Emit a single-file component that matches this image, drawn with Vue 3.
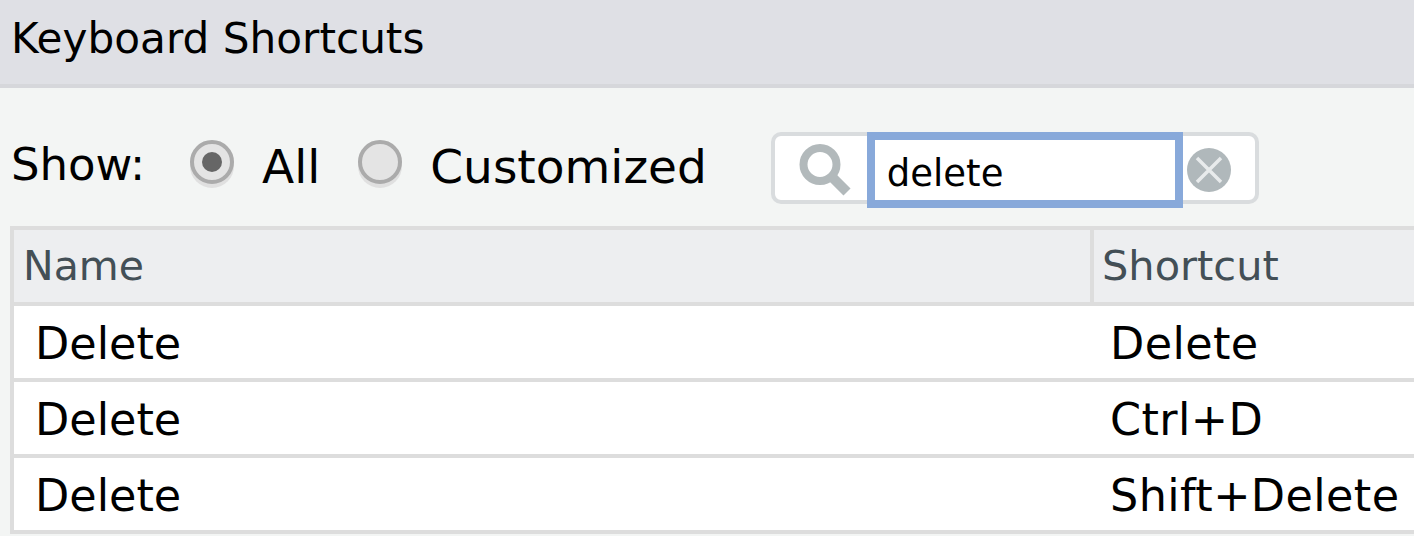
<template>
  <div class="dialog">
    <div class="title-bar">Keyboard Shortcuts</div>
    <div class="filters">
      <span class="show-label">Show:</span>
      <label class="radio-item">
        <span class="radio radio-on"></span>
        <span class="radio-text">All</span>
      </label>
      <label class="radio-item">
        <span class="radio"></span>
        <span class="radio-text">Customized</span>
      </label>
      <div class="search">
        <svg class="search-icon" width="56" height="56" viewBox="0 0 56 56">
          <circle cx="23" cy="22.5" r="16.5" fill="none" stroke="#b2b9bb" stroke-width="8" />
          <path d="M34 34 L50 50" stroke="#b2b9bb" stroke-width="10" />
        </svg>
        <input class="search-input" type="text" value="delete" readonly>
        <svg class="clear-icon" width="44" height="44" viewBox="0 0 44 44">
          <circle cx="22" cy="22" r="22" fill="#b0b8bb" />
          <path d="M10 10 L34 34 M34 10 L10 34" stroke="#e8ebec" stroke-width="3.5" />
        </svg>
      </div>
    </div>
    <div class="table">
      <div class="row head">
        <div class="col-name">Name</div>
        <div class="col-shortcut">Shortcut</div>
      </div>
      <div class="row" v-for="item in shortcuts" :key="item.shortcut">
        <div class="col-name">{{ item.name }}</div>
        <div class="col-shortcut">{{ item.shortcut }}</div>
      </div>
    </div>
  </div>
</template>

<script setup>
  const shortcuts = [
    { name: 'Delete', shortcut: 'Delete' },
    { name: 'Delete', shortcut: 'Ctrl+D' },
    { name: 'Delete', shortcut: 'Shift+Delete' },
  ];
</script>

<style>
  html, body {
    margin: 0;
    overflow: hidden;
  }
</style>

<style scoped>
  .dialog {
    width: 1414px;
    height: 536px;
    overflow: hidden;
    font-family: "DejaVu Sans", sans-serif;
    color: #000;
    background: #F3F5F4;
  }

  .title-bar {
    box-sizing: border-box;
    height: 88px;
    padding-left: 11px;
    line-height: 78px;
    font-size: 42.2px;
    background: #DFE0E5;
    border-bottom: 4px solid #D6D7DB;
  }

  .filters {
    display: flex;
    align-items: flex-start;
    height: 138px;
    padding: 44px 0 0 11px;
    box-sizing: border-box;
  }
  .show-label {
    width: 179px;
    line-height: 66px;
    font-size: 45px;
  }
  .radio-item {
    display: flex;
    align-items: flex-start;
    margin-top: 8px;
  }
  .radio-item + .radio-item {
    margin-left: 38px;
  }
  .radio {
    position: relative;
    box-sizing: border-box;
    width: 44px;
    height: 44px;
    background: #E4E4E4;
    border: 4px solid #ABABAB;
    border-radius: 50%;
    box-shadow: 0 4px 0 #E0E0E0;
  }
  .radio-on::after {
    content: "";
    position: absolute;
    top: 8px;
    left: 8px;
    width: 20px;
    height: 20px;
    background: #666;
    border-radius: 50%;
  }
  .radio-text {
    margin-left: 28px;
    line-height: 54px;
    font-size: 47px;
  }

  .search {
    display: flex;
    align-items: flex-start;
    box-sizing: border-box;
    width: 488px;
    height: 72px;
    margin-left: 64px;
    background: #FFF;
    border: 4px solid #D9DCDE;
    border-radius: 10px;
  }
  .search-icon {
    flex: none;
    margin: 6px 0 0 22px;
  }
  .search-input {
    flex: none;
    box-sizing: border-box;
    width: 316px;
    height: 76px;
    margin: -4px 0 -8px 14px;
    padding: 6px 0 0 12px;
    font-family: "DejaVu Sans", sans-serif;
    font-size: 37px;
    color: #000;
    background: #FFF;
    border: 8px solid #88A9DA;
    border-radius: 0;
    outline: none;
  }
  .clear-icon {
    flex: none;
    margin: 12px 0 0 4px;
  }

  .table {
    margin-left: 10px;
    background: #FFF;
    border-top: 4px solid #DDD;
    border-left: 4px solid #DDD;
  }
  .row {
    display: flex;
    height: 72px;
    line-height: 76px;
    font-size: 44.5px;
    border-bottom: 4px solid #DDD;
  }
  .col-name {
    box-sizing: border-box;
    width: 1076px;
    padding-left: 21px;
  }
  .col-shortcut {
    padding-left: 20px;
    letter-spacing: 0.4px;
    white-space: nowrap;
  }

  .head {
    line-height: 72px;
    font-size: 41px;
    color: #434F56;
    background: #EDEEF0;
  }
  .head .col-name {
    padding-left: 9px;
  }
  .head .col-shortcut {
    padding-left: 8px;
    font-size: 41.5px;
    letter-spacing: 0;
    border-left: 4px solid #DDD;
  }
</style>
